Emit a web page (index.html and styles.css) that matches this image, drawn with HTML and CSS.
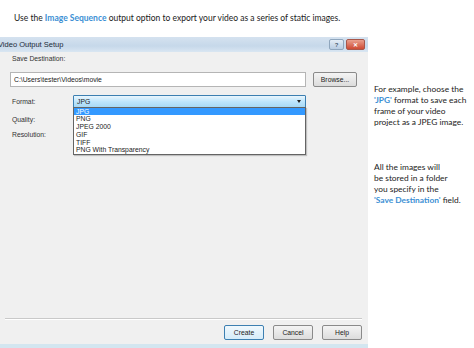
FILE: index.html
```html
<!DOCTYPE html>
<html lang="en">
<head>
    <meta charset="UTF-8">
    <title>Image Sequence Output</title>
    <link rel="stylesheet" href="styles.css">
</head>
<body>
    <p class="caption">Use the <b class="hl">Image Sequence</b> output option to export your video as a series of static images.</p>

    <div class="page">
        <div class="dialog">
            <div class="titlebar">
                <span class="title">Video Output Setup</span>
                <span class="tb-btn help">?</span>
                <span class="tb-btn close">&#x2715;</span>
            </div>
            <div class="body">
                <div class="label">Save Destination:</div>
                <div class="dest-row">
                    <div class="input">C:\Users\tester\Videos\movie</div>
                    <div class="btn browse">Browse...</div>
                </div>

                <div class="form-row">
                    <div class="label">Format:</div>
                    <div class="select-wrap">
                        <div class="select">JPG<span class="arrow"></span></div>
                        <ul class="options">
                            <li class="selected">JPG</li>
                            <li>PNG</li>
                            <li>JPEG 2000</li>
                            <li>GIF</li>
                            <li>TIFF</li>
                            <li>PNG With Transparency</li>
                        </ul>
                    </div>
                </div>
                <div class="form-row quality"><div class="label">Quality:</div></div>
                <div class="form-row"><div class="label">Resolution:</div></div>

                <div class="spacer"></div>
                <div class="separator"></div>
                <div class="actions">
                    <div class="btn default">Create</div>
                    <div class="btn">Cancel</div>
                    <div class="btn">Help</div>
                </div>
            </div>
            <div class="frame-bottom"></div>
        </div>

        <div class="notes">
            <p>For example, choose the<br><b class="hl">'JPG'</b> format to save each<br>frame of your video<br>project as a JPEG image.</p>
            <p class="second">All the images will<br>be stored in a folder<br>you specify in the<br><b class="hl">'Save Destination'</b> field.</p>
        </div>
    </div>
</body>
</html>
```

FILE: styles.css
```css
body {
    margin: 0;
    width: 474px;
    height: 348px;
    overflow: hidden;
    background-color: #fff;
    font-family: Lato, sans-serif;
    color: #222;
}
.caption {
    margin: 0;
    padding: 12px 0 0 14px;
    height: 25px;
    font-size: 8.5px;
    line-height: 12px;
    color: #1a1a1a;
}
.hl {
    color: #3b8fd4;
    font-weight: bold;
}
.page {
    display: flex;
}
.dialog {
    flex: none;
    margin-left: -4px;
    width: 372px;
    height: 311px;
    display: flex;
    flex-direction: column;
    background-color: #f0f0f0;
    font-family: "Liberation Sans", sans-serif;
    font-size: 6.8px;
    color: #333;
}
.titlebar {
    height: 15px;
    display: flex;
    align-items: center;
    gap: 2px;
    padding: 0 3px 0 2px;
    background: linear-gradient(to bottom, #d5e2ef, #c6d8ea 60%, #d9e6f2);
}
.title {
    flex: 1;
    font-size: 7.5px;
    color: #1e2b3a;
}
.tb-btn {
    height: 9px;
    display: flex;
    align-items: center;
    justify-content: center;
    border-radius: 2px;
    font-size: 6px;
    font-weight: bold;
}
.tb-btn.help {
    width: 13px;
    background: linear-gradient(to bottom, #e4edf6, #b9cde2);
    border: 1px solid #8fa6bd;
    color: #4a5d72;
}
.tb-btn.close {
    width: 17px;
    background: linear-gradient(to bottom, #eaa08e, #cf4a33);
    border: 1px solid #a8574a;
    color: #fff;
}
.body {
    flex: 1;
    display: flex;
    flex-direction: column;
    padding: 3px 11px 0 16px;
}
.label {
    color: #333;
}
.dest-row {
    display: flex;
    gap: 7px;
    margin: 10px 0 8px -2px;
}
.input {
    flex: 1;
    height: 13px;
    line-height: 13px;
    padding-left: 3px;
    background-color: #fff;
    border: 1px solid #b5b5b5;
    color: #222;
}
.btn {
    width: 38px;
    height: 12px;
    line-height: 12px;
    text-align: center;
    border: 1px solid #8a8a8a;
    border-radius: 2px;
    background: linear-gradient(to bottom, #f4f4f4, #dcdcdc);
    color: #222;
}
.btn.browse {
    width: 42px;
    height: 13px;
    line-height: 13px;
}
.form-row {
    display: flex;
    align-items: center;
    height: 12px;
}
.form-row .label {
    width: 61px;
}
.form-row.quality {
    margin-top: 6px;
    margin-bottom: 3px;
}
.select-wrap {
    position: relative;
    width: 233px;
}
.select {
    position: relative;
    height: 11px;
    line-height: 11px;
    padding-left: 3px;
    border: 1px solid #3c7fb1;
    border-radius: 1px;
    background: linear-gradient(to bottom, #eaf6fd, #bee6fd 50%, #a7d9f5);
    color: #1a1a1a;
}
.arrow {
    position: absolute;
    right: 4px;
    top: 4px;
    border-left: 2.5px solid transparent;
    border-right: 2.5px solid transparent;
    border-top: 3px solid #222;
}
.options {
    position: absolute;
    top: 12px;
    left: 0;
    right: 0;
    margin: 0;
    padding: 0;
    list-style: none;
    background-color: #fff;
    border: 1px solid #646464;
    box-shadow: 1px 1px 1px rgba(0, 0, 0, 0.2);
}
.options li {
    height: 7.8px;
    line-height: 7.8px;
    padding-left: 2px;
    color: #222;
}
.options li.selected {
    background-color: #3399ff;
    color: #fff;
}
.spacer {
    flex: 1;
}
.separator {
    height: 0;
    margin: 0 -5px 0 -7px;
    border-top: 1px solid #c9c9c9;
    border-bottom: 1px solid #fff;
}
.actions {
    display: flex;
    justify-content: flex-end;
    gap: 9px;
    margin-right: -5px;
    padding: 5px 0 4px;
}
.actions .btn {
    height: 13px;
    line-height: 13px;
}
.btn.default {
    border-color: #3c7fb1;
    background: linear-gradient(to bottom, #f0f8fd, #d6ecf9);
}
.frame-bottom {
    height: 4px;
    background-color: #d3e6f0;
}
.notes {
    flex: none;
    padding: 47px 0 0 6px;
    font-size: 8.4px;
    line-height: 11px;
    white-space: nowrap;
    color: #222;
}
.notes p {
    margin: 0;
}
.notes .second {
    margin-top: 34px;
}
```
